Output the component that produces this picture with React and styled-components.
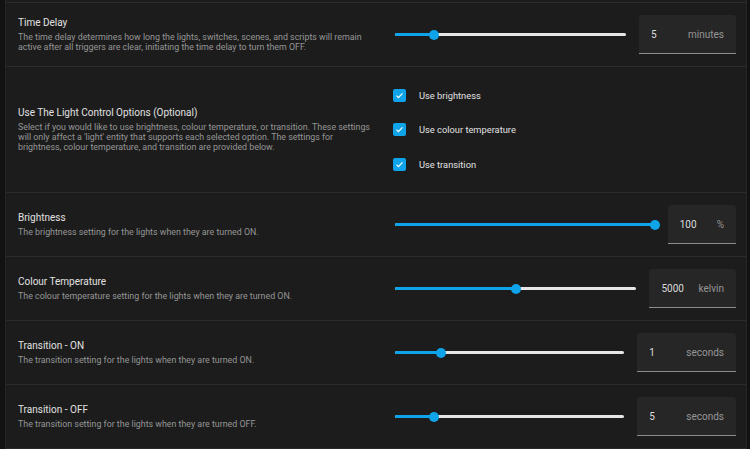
import React from "react";
import styled, { createGlobalStyle } from "styled-components";

const Global = createGlobalStyle`
  html, body { margin: 0; padding: 0; background: #121212; }
  body { font-family: Roboto, "Noto Sans", "Liberation Sans", sans-serif; -webkit-font-smoothing: antialiased; }
`;

const Page = styled.div`
  width: 750px;
  height: 449px;
  overflow: hidden;
  background: #121212;
`;

const Card = styled.div`
  margin: 0 3px 0 5px;
  padding-top: 2px;
  background: #1c1c1c;
  border-left: 1px solid #262626;
  border-right: 1px solid #262626;
  min-height: 447px;
`;

const Row = styled.div`
  display: grid;
  grid-template-columns: 358px 346px;
  column-gap: 14px;
  align-items: center;
  height: ${(p) => p.$h || 63}px;
  padding: 0 9px 0 12px;
  border-bottom: 1px solid #2b2b2b;
  &:first-child { border-top: 1px solid #2b2b2b; }
`;

const Info = styled.div`
  display: flex;
  flex-direction: column;
  gap: 3px;
`;

const Title = styled.div`
  color: #e1e1e1;
  font-size: 10px;
  line-height: 12px;
`;

const Desc = styled.div`
  color: #969696;
  font-size: 8.85px;
  line-height: 10px;
`;

const Control = styled.div`
  display: flex;
  align-items: center;
  gap: 8px;
`;

const SliderWrap = styled.div`
  flex: 1;
  padding: 0 5px;
  height: 20px;
  display: flex;
  align-items: center;
`;

const Track = styled.div`
  position: relative;
  width: 100%;
  height: 3px;
  border-radius: 2px;
  background: #e6e6e6;
`;

const Fill = styled.div`
  position: absolute;
  left: 0;
  top: 0;
  bottom: 0;
  border-radius: 2px;
  background: #0fa3ea;
`;

const Thumb = styled.div`
  position: absolute;
  top: 50%;
  width: 10px;
  height: 10px;
  margin: -5px 0 0 -5px;
  border-radius: 50%;
  background: #0fa3ea;
`;

const Field = styled.div`
  display: flex;
  align-items: center;
  height: 38px;
  padding: 0 12px;
  background: #262626;
  border-radius: 3px 3px 0 0;
  border-bottom: 1px solid #8c8c8c;
`;

const Value = styled.span`
  width: 37px;
  color: #dcdcdc;
  font-size: 10px;
`;

const Suffix = styled.span`
  color: #969696;
  font-size: 10px;
`;

const Checks = styled.div`
  display: flex;
  flex-direction: column;
  padding-left: 3px;
`;

const CheckItem = styled.label`
  display: flex;
  align-items: center;
  gap: 13px;
  height: 34.5px;
  color: #e1e1e1;
  font-size: 9.3px;
`;

const Box = styled.span`
  width: 13px;
  height: 13px;
  border-radius: 2px;
  background: #0fa3ea;
  display: flex;
  align-items: center;
  justify-content: center;
`;

function Slider({ pct }) {
  return (
    <SliderWrap>
      <Track>
        <Fill style={{ width: `${pct}%` }} />
        <Thumb style={{ left: `${pct}%` }} />
      </Track>
    </SliderWrap>
  );
}

function NumberRow({ title, desc, pct, value, unit }) {
  return (
    <Row>
      <Info>
        <Title>{title}</Title>
        <Desc>{desc}</Desc>
      </Info>
      <Control>
        <Slider pct={pct} />
        <Field>
          <Value>{value}</Value>
          <Suffix>{unit}</Suffix>
        </Field>
      </Control>
    </Row>
  );
}

function Check({ label }) {
  return (
    <CheckItem>
      <Box>
        <svg width="9" height="9" viewBox="0 0 24 24">
          <path d="M4 12.5l5 5L20 6.5" fill="none" stroke="#fff" strokeWidth="3.2" />
        </svg>
      </Box>
      {label}
    </CheckItem>
  );
}

export default function App() {
  return (
    <Page>
      <Global />
      <Card>
        <NumberRow
          title="Time Delay"
          desc="The time delay determines how long the lights, switches, scenes, and scripts will remain active after all triggers are clear, initiating the time delay to turn them OFF."
          pct={17}
          value="5"
          unit="minutes"
        />
        <Row $h={125}>
          <Info>
            <Title>Use The Light Control Options (Optional)</Title>
            <Desc>
              Select if you would like to use brightness, colour temperature, or transition. These settings will only affect a 'light' entity that supports each selected option. The settings for brightness, colour temperature, and transition are provided below.
            </Desc>
          </Info>
          <Checks>
            <Check label="Use brightness" />
            <Check label="Use colour temperature" />
            <Check label="Use transition" />
          </Checks>
        </Row>
        <NumberRow
          title="Brightness"
          desc="The brightness setting for the lights when they are turned ON."
          pct={100}
          value="100"
          unit="%"
        />
        <NumberRow
          title="Colour Temperature"
          desc="The colour temperature setting for the lights when they are turned ON."
          pct={50}
          value="5000"
          unit="kelvin"
        />
        <NumberRow
          title="Transition - ON"
          desc="The transition setting for the lights when they are turned ON."
          pct={20}
          value="1"
          unit="seconds"
        />
        <NumberRow
          title="Transition - OFF"
          desc="The transition setting for the lights when they are turned OFF."
          pct={17}
          value="5"
          unit="seconds"
        />
      </Card>
    </Page>
  );
}
